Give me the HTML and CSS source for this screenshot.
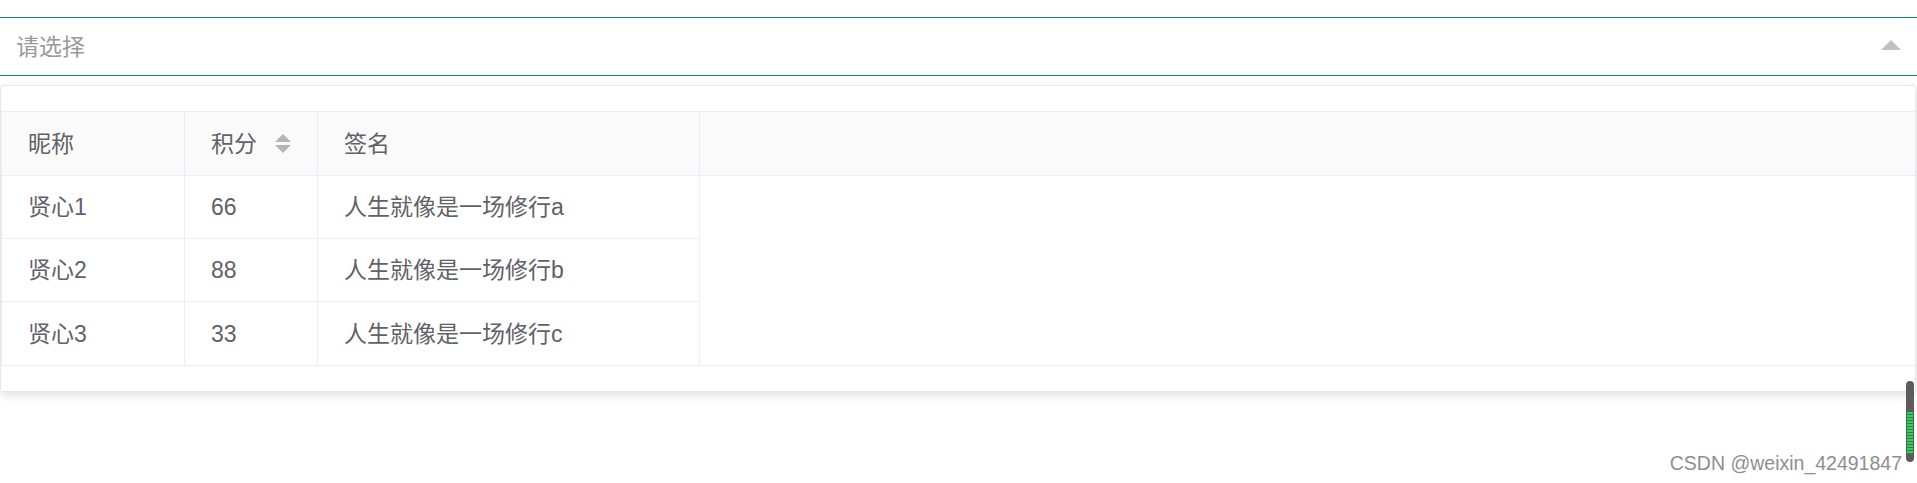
FILE: index.html
```html
<!DOCTYPE html>
<html lang="zh-CN">
<head>
<meta charset="utf-8">
<title>select table</title>
<link rel="stylesheet" href="styles.css">
</head>
<body>
<div class="page">
  <div class="select">
    <span class="placeholder">请选择</span>
    <span class="caret"></span>
  </div>
  <div class="panel">
    <div class="table">
      <div class="th">昵称</div>
      <div class="th">积分 <span class="sort"><i class="up"></i><i class="down"></i></span></div>
      <div class="th">签名</div>
      <div class="th gutter"></div>

      <div class="td">贤心1</div>
      <div class="td">66</div>
      <div class="td">人生就像是一场修行a</div>
      <div class="empty"></div>

      <div class="td">贤心2</div>
      <div class="td">88</div>
      <div class="td">人生就像是一场修行b</div>

      <div class="td last">贤心3</div>
      <div class="td last">33</div>
      <div class="td last">人生就像是一场修行c</div>
    </div>
  </div>
  <div class="meter"><div class="meter-fill"></div></div>
  <div class="watermark">CSDN @weixin_42491847</div>
</div>
</body>
</html>
```
FILE: styles.css
```css
html, body {
  margin: 0;
  padding: 0;
  background: #fff;
}
body {
  font-family: "Liberation Sans", "Noto Sans CJK SC", sans-serif;
  color: #606266;
  width: 1917px;
  height: 483px;
  overflow: hidden;
}
.page {
  position: relative;
  padding-top: 17px;
  height: 466px;
}
.select {
  height: 57px;
  border-top: 1px solid #17877b;
  border-bottom: 1px solid #17877b;
  display: flex;
  align-items: center;
  justify-content: space-between;
  padding: 0 16px 0 16px;
}
.placeholder {
  font-size: 23px;
  color: #9a9a9a;
  line-height: 30px;
}
.caret {
  width: 0;
  height: 0;
  border-left: 10px solid transparent;
  border-right: 10px solid transparent;
  border-bottom: 10px solid #c0c0c0;
  margin-top: -4px;
}
.panel {
  margin-top: 9px;
  border: 1px solid #e4e7ed;
  border-radius: 3px;
  box-shadow: 0 3px 10px 0 rgba(0, 0, 0, 0.12);
  padding: 25px 0 25px 0;
  width: 1914px;
}
.table {
  display: grid;
  grid-template-columns: 183px 133px 382px 1fr;
  border: 1px solid #ebeef5;
  border-right: none;
  font-size: 23px;
  line-height: 30px;
}
.th {
  height: 63px;
  background: #fafafa;
  border-bottom: 1px solid #ebeef5;
  border-right: 1px solid #ebeef5;
  display: flex;
  align-items: center;
  padding-left: 26px;
  color: #606266;
}
.th.gutter {
  border-right: none;
}
.td {
  height: 62px;
  border-bottom: 1px solid #ebeef5;
  border-right: 1px solid #ebeef5;
  display: flex;
  align-items: center;
  padding-left: 26px;
}
.td.last {
  border-bottom: none;
  height: 63px;
}
.empty {
  grid-column: 4;
  grid-row: 2 / span 3;
}
.sort {
  display: inline-flex;
  flex-direction: column;
  align-items: center;
  margin-left: 18px;
  gap: 3px;
}
.sort .up {
  width: 0;
  height: 0;
  border-left: 8px solid transparent;
  border-right: 8px solid transparent;
  border-bottom: 8px solid #b5b5b5;
}
.sort .down {
  width: 0;
  height: 0;
  border-left: 8px solid transparent;
  border-right: 8px solid transparent;
  border-top: 8px solid #b5b5b5;
}
.meter {
  position: absolute;
  left: 1906px;
  top: 381px;
  width: 8px;
  height: 81px;
  background: #5c5c5c;
  border-radius: 4px;
  display: flex;
  flex-direction: column;
  justify-content: flex-end;
  padding: 0 1px 8px 1px;
  box-sizing: border-box;
}
.meter-fill {
  height: 42px;
  background: repeating-linear-gradient(to bottom, #2bd45a 0, #2bd45a 2px, #3a7a4a 2px, #3a7a4a 3px);
}
.watermark {
  position: absolute;
  right: 15px;
  top: 452px;
  font-size: 19.5px;
  line-height: 22px;
  color: #8e8e8e;
  font-family: "Liberation Sans", sans-serif;
}
```
